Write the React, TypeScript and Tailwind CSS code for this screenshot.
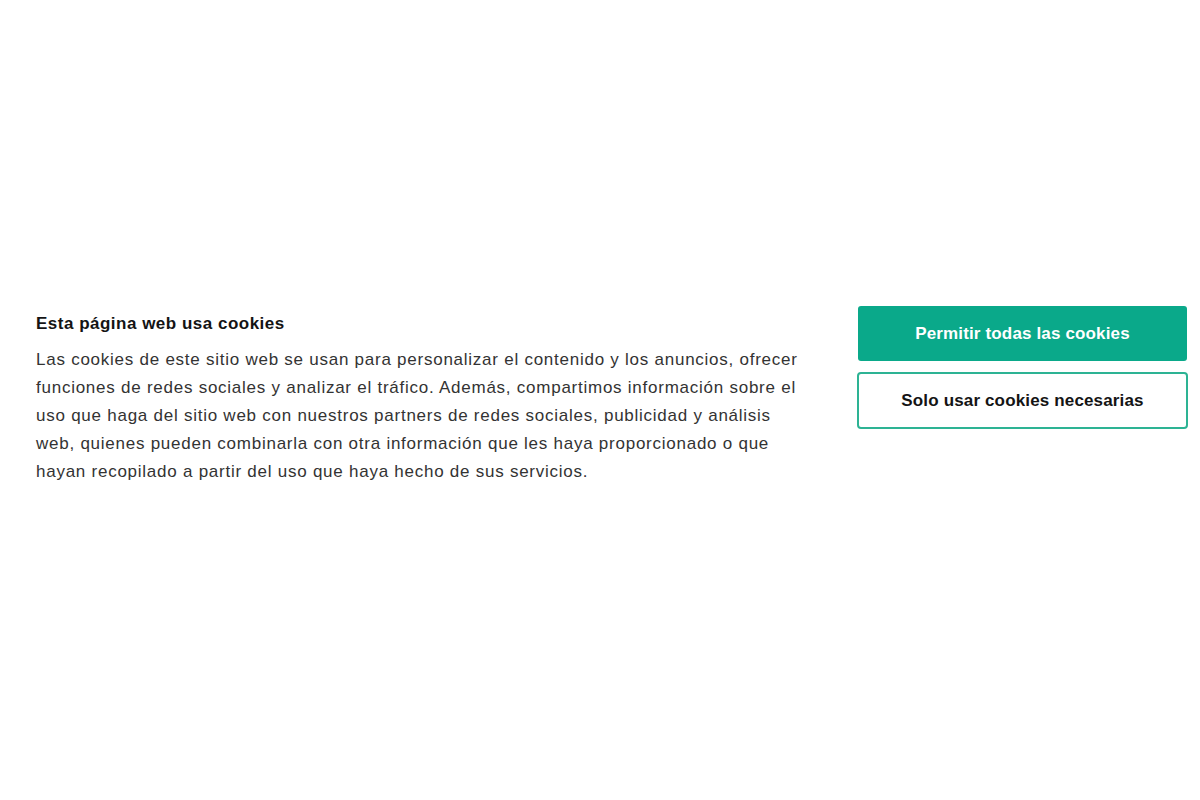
export default function App() {
  return (
    <div className="min-h-[800px] w-full bg-white" style={{ fontFamily: '"Liberation Sans", Arial, sans-serif' }}>
      <div className="flex justify-between pl-[36px] pr-[12px] pt-[306px]">
        <div className="w-[775px] pt-[7px]">
          <h2 className="text-[17px] font-bold leading-[22px] tracking-[0.5px] text-[#141414]">Esta página web usa cookies</h2>
          <p className="mt-[11px] text-[17px] leading-[28px] tracking-[0.75px] text-[#333333]">
            Las cookies de este sitio web se usan para personalizar el contenido y los anuncios, ofrecer funciones de redes
            sociales y analizar el tráfico. Además, compartimos información sobre el uso que haga del sitio web con nuestros
            partners de redes sociales, publicidad y análisis web, quienes pueden combinarla con otra información que les haya
            proporcionado o que hayan recopilado a partir del uso que haya hecho de sus servicios.
          </p>
        </div>
        <div className="flex w-[331px] flex-col items-center gap-[11px]">
          <button className="h-[55px] w-[329px] rounded-[3px] bg-[#0aa98a] text-[17px] font-bold tracking-[0.15px] text-white">
            Permitir todas las cookies
          </button>
          <button className="h-[57px] w-[331px] rounded-[4px] border-2 border-[#2db394] bg-white text-[17px] font-bold tracking-[0.15px] text-[#141414]">
            Solo usar cookies necesarias
          </button>
        </div>
      </div>
    </div>
  );
}
